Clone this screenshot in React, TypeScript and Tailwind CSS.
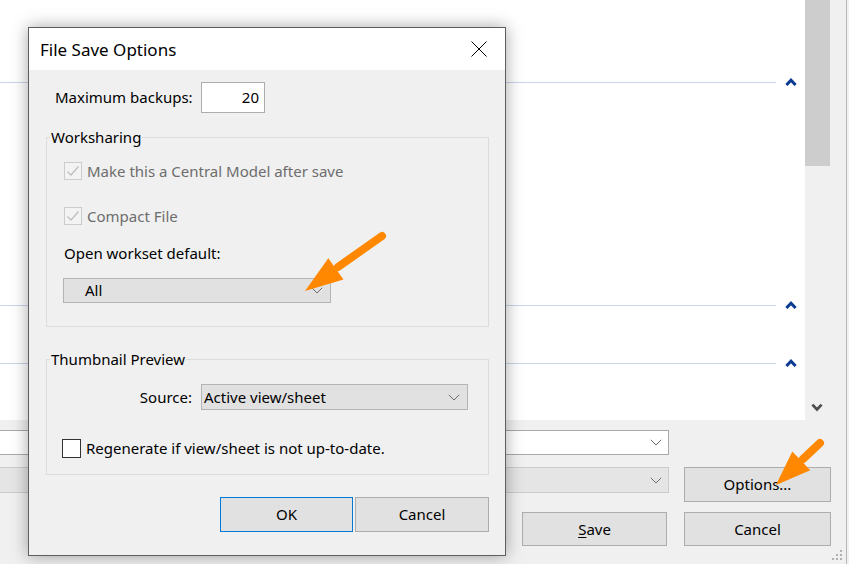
import React from "react";

const UpChevron = () => (
  <svg width="12" height="8" viewBox="0 0 12 8">
    <path d="M1.4 7 L6 2.2 L10.6 7" fill="none" stroke="#0a3a92" strokeWidth="3" strokeLinejoin="miter" />
  </svg>
);

const DownChevron = () => (
  <svg width="12" height="9" viewBox="0 0 12 9">
    <path d="M1.4 1.6 L6 6.4 L10.6 1.6" fill="none" stroke="#4f4f4f" strokeWidth="2.8" />
  </svg>
);

const ThinChevron = () => (
  <svg width="12" height="7" viewBox="0 0 12 7">
    <path d="M0.8 0.8 L6 6 L11.2 0.8" fill="none" stroke="#6e6e6e" strokeWidth="1" />
  </svg>
);

const Divider = () => (
  <div className="h-[12px] flex items-center">
    <div className="w-[776px] h-px bg-[#c8d5ea]" />
    <div className="ml-[9px] flex items-center">
      <UpChevron />
    </div>
  </div>
);

const DisabledCheck = () => (
  <div className="w-[18px] h-[18px] border border-[#cccccc] bg-[#f3f3f3] flex items-center justify-center">
    <svg width="16" height="16" viewBox="0 0 16 16">
      <path d="M2.5 8.5 L6 12 L13.5 3.5" fill="none" stroke="#bdbdbd" strokeWidth="1.2" />
    </svg>
  </div>
);

export default function App() {
  return (
    <div className="relative w-[849px] h-[564px] overflow-hidden bg-[#f0f0f0] text-black font-['Noto_Sans',sans-serif]">
      {/* Background window */}
      <div className="flex h-full">
        <div className="w-[846px] flex flex-col">
          <div className="flex h-[420px]">
            <div className="w-[805px] bg-white flex flex-col pt-[76px]">
              <Divider />
              <div className="h-[211px]" />
              <Divider />
              <div className="h-[46px]" />
              <Divider />
            </div>
            <div className="w-[41px] flex flex-col justify-between">
              <div className="w-[25px] h-[166px] bg-[#cdcdcd]" />
              <div className="pl-[6px] pb-[8px]">
                <DownChevron />
              </div>
            </div>
          </div>
          <div className="flex flex-col text-[15px]">
            <div className="mt-[10px] w-[669px] h-[25px] bg-white border-y border-r border-[#a9a9a9] flex items-center justify-end pr-[6px]">
              <ThinChevron />
            </div>
            <div className="mt-[12px] flex items-start">
              <div className="w-[669px] h-[26px] bg-[#e5e5e5] border-y border-r border-[#cccccc] flex items-center justify-end pr-[6px]">
                <ThinChevron />
              </div>
              <div className="ml-[15px] w-[147px] h-[35px] bg-[#e1e1e1] border border-[#adadad] flex items-center justify-center">
                Options...
              </div>
            </div>
            <div className="mt-[10px] flex">
              <div className="ml-[522px] w-[145px] h-[34px] bg-[#e1e1e1] border border-[#adadad] flex items-center justify-center">
                <span>
                  <span className="underline underline-offset-2">S</span>ave
                </span>
              </div>
              <div className="ml-[17px] w-[147px] h-[34px] bg-[#e1e1e1] border border-[#adadad] flex items-center justify-center">
                Cancel
              </div>
            </div>
          </div>
        </div>
        <div className="w-px bg-[#b8b8b8]" />
        <div className="w-[2px]" />
      </div>

      {/* Dialog */}
      <div className="absolute left-[28px] top-[27px] w-[478px] h-[529px] border border-[#5e5e5e] bg-[#f0f0f0] shadow-[0_0_16px_rgba(0,0,0,0.35)] flex flex-col">
        <div className="h-[42px] bg-white flex items-center justify-between shrink-0">
          <span className="pl-[11px] text-[17px] leading-none">File Save Options</span>
          <div className="w-[52px] flex justify-center">
            <svg width="16" height="16" viewBox="0 0 16 16">
              <path d="M0.5 0.5 L15.5 15.5 M15.5 0.5 L0.5 15.5" stroke="#000" strokeWidth="1" />
            </svg>
          </div>
        </div>
        <div className="flex flex-col text-[15px]">
          <div className="mt-[12px] flex items-center pl-[26px]">
            <span className="w-[146px]">Maximum backups:</span>
            <div className="w-[64px] h-[31px] bg-white border border-[#adadad] flex items-center justify-end pr-[5px]">
              20
            </div>
          </div>

          <fieldset className="mt-[14px] ml-[17px] w-[443px] border border-[#dcdcdc]">
            <legend className="ml-[3px] px-[1px] leading-[20px]">Worksharing</legend>
            <div className="flex flex-col pl-[17px] pb-[23px]">
              <div className="mt-[13px] h-[22px] flex items-center">
                <DisabledCheck />
                <span className="ml-[5px] text-[#6d6d6d]">Make this a Central Model after save</span>
              </div>
              <div className="mt-[23px] h-[22px] flex items-center">
                <DisabledCheck />
                <span className="ml-[5px] text-[#6d6d6d]">Compact File</span>
              </div>
              <div className="mt-[15px] h-[22px] flex items-center">Open workset default:</div>
              <div className="mt-[14px] -ml-px w-[268px] h-[25px] bg-[#e1e1e1] border border-[#b4b4b4] flex items-center justify-between pl-[21px] pr-[7px]">
                <span>All</span>
                <ThinChevron />
              </div>
            </div>
          </fieldset>

          <fieldset className="mt-[22px] ml-[17px] w-[443px] border border-[#dcdcdc]">
            <legend className="ml-[3px] px-[1px] leading-[20px]">Thumbnail Preview</legend>
            <div className="flex flex-col pb-[15px]">
              <div className="mt-[15px] flex items-center">
                <span className="w-[145px] text-right">Source:</span>
                <div className="ml-[9px] w-[267px] h-[26px] bg-[#e1e1e1] border border-[#b4b4b4] flex items-center justify-between pl-[2px] pr-[7px]">
                  <span>Active view/sheet</span>
                  <ThinChevron />
                </div>
              </div>
              <div className="mt-[27px] h-[22px] flex items-center pl-[15px]">
                <div className="w-[19px] h-[19px] bg-white border border-[#333333]" />
                <span className="ml-[5px]">Regenerate if view/sheet is not up-to-date.</span>
              </div>
            </div>
          </fieldset>

          <div className="mt-[22px] flex justify-end pr-[16px] gap-[2px]">
            <div className="w-[133px] h-[35px] bg-[#e1e1e1] border border-[#0078d7] flex items-center justify-center">OK</div>
            <div className="w-[134px] h-[35px] bg-[#e1e1e1] border border-[#adadad] flex items-center justify-center">Cancel</div>
          </div>
        </div>
      </div>

      {/* Annotation arrows */}
      <svg className="absolute left-0 top-0 pointer-events-none" width="849" height="564" viewBox="0 0 849 564">
        <line x1="382" y1="236" x2="338" y2="267" stroke="#ff8800" strokeWidth="8" strokeLinecap="round" />
        <polygon points="305,291 343.5,279.5 328.3,258.3" fill="#ff8800" />
        <line x1="820" y1="443" x2="803" y2="459" stroke="#ff8800" strokeWidth="8" strokeLinecap="round" />
        <polygon points="776,485 810.3,470.2 792.3,451.4" fill="#ff8800" />
      </svg>

      {/* Resize grip */}
      <svg className="absolute right-[6px] bottom-[3px]" width="12" height="12" viewBox="0 0 12 12">
        <rect x="9" y="1" width="2" height="2" fill="#b0b0b0" />
        <rect x="5" y="5" width="2" height="2" fill="#b0b0b0" />
        <rect x="9" y="5" width="2" height="2" fill="#b0b0b0" />
        <rect x="1" y="9" width="2" height="2" fill="#b0b0b0" />
        <rect x="5" y="9" width="2" height="2" fill="#b0b0b0" />
        <rect x="9" y="9" width="2" height="2" fill="#b0b0b0" />
      </svg>
    </div>
  );
}
